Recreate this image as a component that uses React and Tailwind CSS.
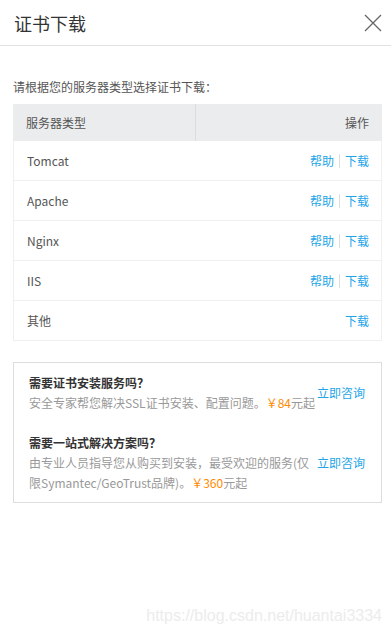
import React from "react";

const servers = [
  { name: "Tomcat", help: true },
  { name: "Apache", help: true },
  { name: "Nginx", help: true },
  { name: "IIS", help: true },
  { name: "其他", help: false },
];

const font = { fontFamily: '"Noto Sans CJK SC", "Noto Sans", sans-serif' };

const CertDownload = () => {
  return (
    <div className="bg-white min-h-[637px] w-[391px] relative text-[#555]" style={font}>
      {/* Header */}
      <div className="flex items-center justify-between h-[46px] pl-[14px] pr-[9px] border-b border-[#e2e2e2]">
        <h2 className="text-[18px] text-[#333] font-normal leading-none">证书下载</h2>
        <button className="w-[19px] h-[19px] flex items-center justify-center text-[#666]">
          <svg width="18" height="18" viewBox="0 0 18 18" fill="none" stroke="currentColor" strokeWidth="1.3">
            <path d="M1 1 L17 17 M17 1 L1 17" />
          </svg>
        </button>
      </div>

      <div className="pl-[13px]">
        <p className="text-[12px] leading-[20px] mt-[31px] text-[#555]">请根据您的服务器类型选择证书下载：</p>

        {/* Server table */}
        <div className="mt-[7px] w-[369px]">
          <div className="flex h-[37px] bg-[#ebeced] text-[12px] text-[#555]">
            <div className="w-[183px] border-r border-[#dcdcdc] flex items-center pl-[13px]">服务器类型</div>
            <div className="flex-1 flex items-center justify-end pr-[13px]">操作</div>
          </div>
          {servers.map((s) => (
            <div
              key={s.name}
              className="flex items-center justify-between h-[40px] border-x border-b border-[#f0f0f0] pl-[13px] pr-[12px] text-[12px]"
            >
              <span className="text-[#555]">{s.name}</span>
              <span className="flex items-center text-[#1ea5e8]">
                {s.help && (
                  <>
                    <a className="cursor-pointer">帮助</a>
                    <span className="mx-[5px] w-px h-[14px] bg-[#dddddd]" />
                  </>
                )}
                <a className="cursor-pointer">下载</a>
              </span>
            </div>
          ))}
        </div>

        {/* Services box */}
        <div className="mt-[21px] w-[369px] border border-[#dddddd] pt-[10px] pb-[9px] pl-[15px] pr-[12px] text-[12px] leading-[20px]">
          <div className="flex items-center">
            <div className="w-[288px]">
              <p className="font-bold text-[#333]">需要证书安装服务吗？</p>
              <p className="text-[#999] whitespace-nowrap">
                安全专家帮您解决SSL证书安装、配置问题。<span className="text-[#ff8a00]">￥84</span>元起
              </p>
            </div>
            <a className="text-[#1ea5e8] cursor-pointer whitespace-nowrap">立即咨询</a>
          </div>
          <div className="flex items-center mt-[20px]">
            <div className="w-[288px]">
              <p className="font-bold text-[#333]">需要一站式解决方案吗？</p>
              <p className="text-[#999]">
                由专业人员指导您从购买到安装，最受欢迎的服务(仅限Symantec/GeoTrust品牌)。<span className="text-[#ff8a00]">￥360</span>元起
              </p>
            </div>
            <a className="text-[#1ea5e8] cursor-pointer whitespace-nowrap">立即咨询</a>
          </div>
        </div>
      </div>

      {/* Watermark */}
      <div
        className="absolute right-[9px] bottom-[9px] text-[16px] text-[#ececec]"
        style={{ fontFamily: '"Liberation Sans", Arial, sans-serif' }}
      >
        https://blog.csdn.net/huantai3334
      </div>
    </div>
  );
};

export default function App() {
  return <CertDownload />;
}
